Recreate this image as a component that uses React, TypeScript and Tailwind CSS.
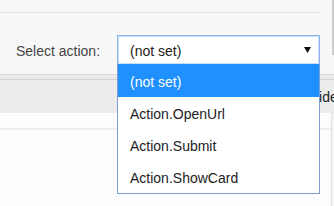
import React from "react";

const items = ["(not set)", "Action.OpenUrl", "Action.Submit", "Action.ShowCard"];

export default function App() {
  return (
    <div
      className="relative w-[334px] h-[206px] overflow-hidden bg-[#fdfdfd] text-[14px] text-[#222]"
      style={{ fontFamily: '"Liberation Sans", Arial, sans-serif' }}
    >
      {/* upper panel */}
      <div className="flex h-[74px] bg-[#f8f8f8]">
        <div className="w-[320px] flex flex-col">
          <div className="h-[13px] border-b border-[#e6e6e6]" />
          <div className="flex items-center pt-[20px]">
            <div className="w-[117px] pl-[16px] pt-[3px] text-[#444] leading-[30px]">Select action:</div>
            <div className="relative w-[203px] h-[30px] bg-white border border-[#8fb4ec] shadow-[inset_0_0_0_1px_#c9dcf7] flex items-center pl-[12px] pt-[3px]">
              <span className="leading-none">(not set)</span>
              <svg className="absolute right-[8px] top-[11px]" width="7" height="6" viewBox="0 0 7 6">
                <path d="M0 0 H7 L3.5 6 Z" fill="#111" />
              </svg>
            </div>
          </div>
        </div>
        <div className="flex-1 flex justify-end">
          <div className="w-[2px] h-[55px] bg-[#cdcdcd]" />
        </div>
      </div>

      {/* toolbar band */}
      <div className="border-t border-[#d9d9d9] h-[5px] bg-[#e9e9e9]" />
      <div className="border-t border-[#d2d2d2] h-[34px] bg-[#ececec] flex items-center pl-[309px] pt-[2px] text-[#222] whitespace-nowrap">
        Hide
      </div>

      {/* lower area */}
      <div className="flex">
        <div className="flex-1 flex flex-col">
          <div className="h-[15px]" />
          <div className="h-[2px] bg-[#ececec]" />
        </div>
        <div className="w-[3px] h-[93px] border-l border-[#e2e2e2] bg-[#f3f3f3]" />
      </div>

      {/* dropdown list overlay */}
      <div className="absolute left-[117px] top-[64px] w-[203px] bg-white border-x border-b border-[#7f9dd1]">
        {items.map((t, i) => (
          <div
            key={t}
            className={
              i === 0
                ? "h-[33px] flex items-center pl-[12px] pt-[3px] bg-[#1e90ff] text-white"
                : "h-[32px] flex items-center pl-[12px] pt-[3px] text-[#222]"
            }
          >
            {t}
          </div>
        ))}
      </div>
    </div>
  );
}
